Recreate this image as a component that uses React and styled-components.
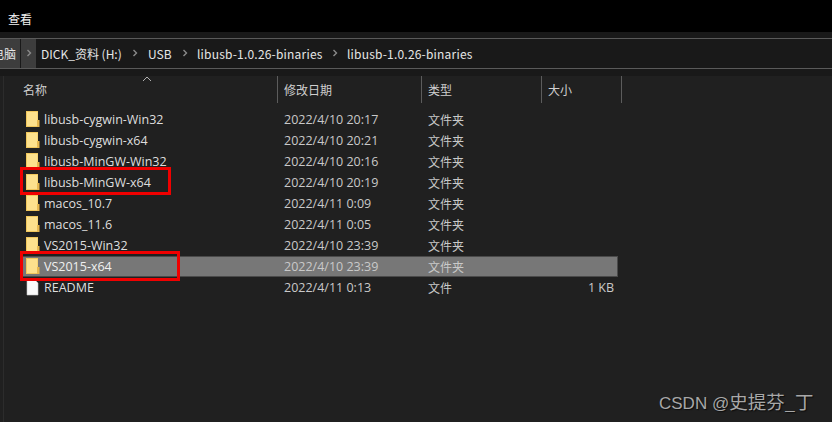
import React from "react";
import styled, { createGlobalStyle } from "styled-components";

const Global = createGlobalStyle`
  html, body { margin: 0; padding: 0; background: #202020; }
  #root { width: 832px; height: 422px; overflow: hidden; }
`;
const FONT = `"Noto Sans CJK SC", "Open Sans", "Liberation Sans", sans-serif`;
const LATIN = `"Open Sans", "Noto Sans CJK SC", sans-serif`;

const Window = styled.div`
  position: relative; width: 832px; height: 422px; overflow: hidden;
  display: flex; flex-direction: column; background: #202020;
  color: #e8e8e8; font: 12.5px ${LATIN};
`;
const Ribbon = styled.div`
  height: 32px; background: #000; flex: none; display: flex; align-items: center;
  padding: 4px 0 0 8px; box-sizing: border-box; font: 12px ${FONT}; color: #f2f2f2;
`;
const AddressWrap = styled.div`
  flex: none; height: 44px; background: #191919; padding-top: 6px; box-sizing: border-box;
`;
const Address = styled.div`
  height: 31px; box-sizing: border-box; border-top: 1px solid #5a5a5a; border-bottom: 1px solid #5a5a5a;
  display: flex; align-items: stretch; background: #191919; overflow: hidden;
`;
const Crumb = styled.div`
  display: flex; align-items: center; flex: none; width: ${p => p.$w}px;
  justify-content: ${p => p.$end ? "flex-end" : p.$text ? "flex-start" : "center"};
  background: ${p => p.$active ? "#3d3d3d" : "transparent"};
  margin-right: ${p => p.$gap || 0}px; font: 12px ${FONT}; color: #e6e6e6; white-space: nowrap;
  letter-spacing: ${p => p.$ls || 0}px; padding: 0 ${p => p.$pr || 0}px 1px 0; box-sizing: border-box;
`;
const Chevron = () => (
  <svg width="6" height="8" viewBox="0 0 6 8"><path d="M1.5 1l3 3-3 3" fill="none" stroke="#8a8a8a" strokeWidth="1.4" /></svg>
);
const Pane = styled.div`
  flex: 1; display: flex; background: #202020; padding-left: 3px;
`;
const Content = styled.div`
  flex: 1; border-left: 1px solid #2c2c2c; position: relative;
`;
const Header = styled.div`
  display: grid; grid-template-columns: 274px 144px 120px 80px; height: 27px; position: relative;
`;
const Col = styled.div`
  border-right: 1px solid #5c5c5c; box-sizing: border-box; display: flex; align-items: center;
  padding-left: ${p => p.$pl}px; font: 12px ${FONT}; color: #cfcfcf;
`;
const SortArrow = styled.svg`
  position: absolute; left: 138px; top: 0;
`;
const Rows = styled.div`
  margin-top: 6px; width: 614px; margin-left: 18px; display: flex; flex-direction: column;
`;
const Row = styled.div`
  display: grid; grid-template-columns: 262px 144px 120px 66px; height: 21px; box-sizing: border-box;
  align-items: center; background: ${p => p.$sel ? "#777777" : "transparent"};
  outline: ${p => p.$sel ? "1px solid #4a4a4a" : "none"}; outline-offset: -1px;
  width: 596px; font: 12.5px ${LATIN}; color: ${p => p.$sel ? "#f0f0f0" : "#dedede"};
`;
const NameCell = styled.div` display: flex; align-items: center; gap: 4px; padding-left: 4px; white-space: nowrap; `;
const Cell = styled.div` white-space: nowrap; font-family: ${p => p.$cjk ? FONT : LATIN}; font-size: ${p => p.$cjk ? 12 : 12.5}px; color: #c9c9c9; `;
const SizeCell = styled.div` text-align: right; font-size: 12.5px; color: #c9c9c9; white-space: nowrap; `;
const Mark = styled.div`
  position: absolute; left: ${p => p.$x}px; top: ${p => p.$y}px; width: ${p => p.$w}px; height: ${p => p.$h}px;
  border: 3px solid #f00000; box-sizing: border-box; pointer-events: none;
`;
const Watermark = styled.div`
  position: absolute; left: 659px; top: 388px; font: 17px "Liberation Sans", "Noto Sans CJK SC", sans-serif;
  color: #a8a8a8; text-shadow: 1px 1px 1px #0c0c0c; white-space: nowrap;
`;
const WatermarkName = styled.span`
  font: 18.5px "Noto Sans CJK SC", sans-serif;
`;

const Folder = () => (
  <svg width="14" height="17" viewBox="0 0 14 17">
    <rect x="0" y="0" width="12" height="16" fill="#f1c75c" />
    <rect x="1" y="1" width="10.5" height="14" fill="#fde18d" />
    <rect x="11" y="9" width="2.5" height="7" fill="#e7b84f" />
  </svg>
);
const FileIcon = () => (
  <svg width="14" height="17" viewBox="0 0 14 17">
    <path d="M1 1h8l3 3v12H1z" fill="#fafafa" stroke="#c8c8c8" strokeWidth="0.6" />
  </svg>
);

const rows = [
  ["libusb-cygwin-Win32", "2022/4/10 20:17"],
  ["libusb-cygwin-x64", "2022/4/10 20:21"],
  ["libusb-MinGW-Win32", "2022/4/10 20:16"],
  ["libusb-MinGW-x64", "2022/4/10 20:19"],
  ["macos_10.7", "2022/4/11 0:09"],
  ["macos_11.6", "2022/4/11 0:05"],
  ["VS2015-Win32", "2022/4/10 23:39"],
  ["VS2015-x64", "2022/4/10 23:39", true],
];

export default function App() {
  return (
    <Window>
      <Global />
      <Ribbon>查看</Ribbon>
      <AddressWrap>
        <Address>
          <Crumb $w={20} $end $active $gap={1} $pr={4}>电脑</Crumb>
          <Crumb $w={15} $active $gap={5}><Chevron /></Crumb>
          <Crumb $w={81} $text>DICK_资料 (H:)</Crumb>
          <Crumb $w={26}><Chevron /></Crumb>
          <Crumb $w={24} $text>USB</Crumb>
          <Crumb $w={25}><Chevron /></Crumb>
          <Crumb $w={125} $text $ls={0.2}>libusb-1.0.26-binaries</Crumb>
          <Crumb $w={25}><Chevron /></Crumb>
          <Crumb $w={125} $text $ls={0.2}>libusb-1.0.26-binaries</Crumb>
        </Address>
      </AddressWrap>
      <Pane>
        <Content>
          <Header>
            <Col $pl={19}>名称</Col>
            <Col $pl={6}>修改日期</Col>
            <Col $pl={6}>类型</Col>
            <Col $pl={6}>大小</Col>
            <SortArrow width="10" height="6" viewBox="0 0 10 6">
              <path d="M1 5l4-4 4 4" fill="none" stroke="#b0b0b0" strokeWidth="1" />
            </SortArrow>
          </Header>
          <Rows>
            {rows.map(([n, d, s]) => (
              <Row key={n} $sel={s}>
                <NameCell><Folder />{n}</NameCell>
                <Cell>{d}</Cell>
                <Cell $cjk>文件夹</Cell>
                <SizeCell />
              </Row>
            ))}
            <Row>
              <NameCell><FileIcon />README</NameCell>
              <Cell>2022/4/11 0:13</Cell>
              <Cell $cjk>文件</Cell>
              <SizeCell>1 KB</SizeCell>
            </Row>
          </Rows>
        </Content>
      </Pane>
      <Mark $x={20} $y={167} $w={151} $h={28} />
      <Mark $x={20} $y={251} $w={160} $h={30} />
      <Watermark>CSDN @<WatermarkName>史提芬_丁</WatermarkName></Watermark>
    </Window>
  );
}
